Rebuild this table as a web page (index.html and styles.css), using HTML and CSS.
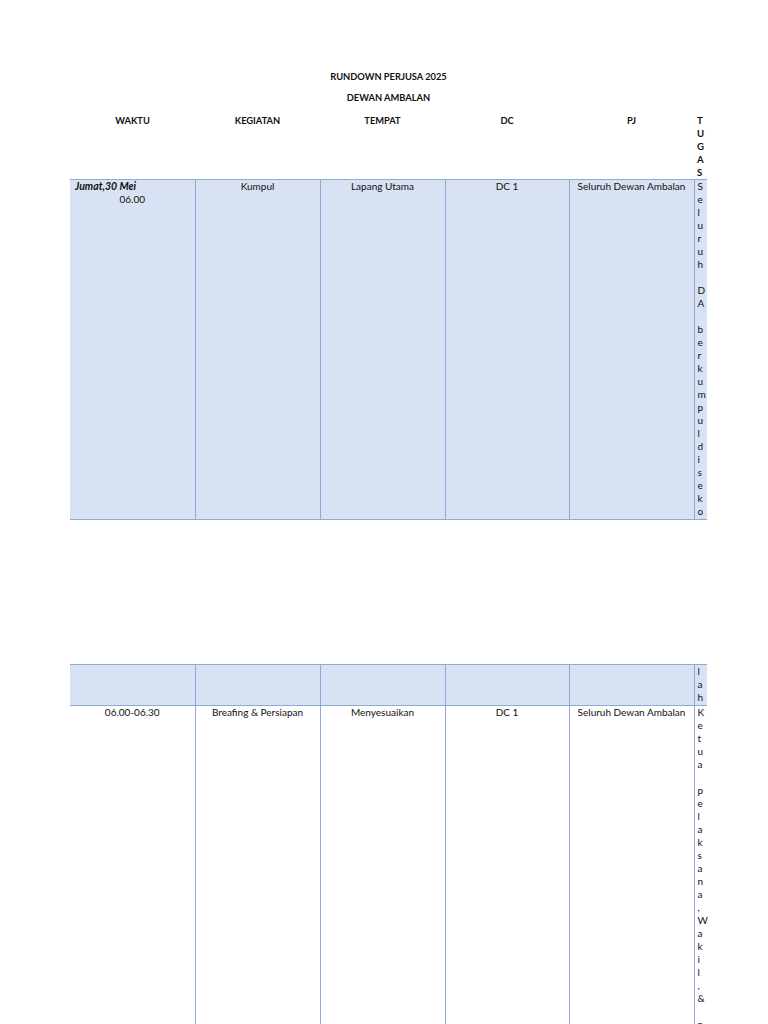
FILE: index.html
```html
<!DOCTYPE html>
<html lang="id">
<head>
<meta charset="utf-8">
<title>Rundown Perjusa 2025</title>
<link rel="stylesheet" href="styles.css">
</head>
<body>
<div class="page">
  <p class="title">RUNDOWN PERJUSA 2025</p>
  <p class="subtitle">DEWAN AMBALAN</p>
  <table class="grid first">
    <colgroup><col class="c"><col class="c"><col class="c"><col class="c4"><col class="c"><col class="narrow"></colgroup>
    <thead>
      <tr class="head">
        <th>WAKTU</th><th>KEGIATAN</th><th>TEMPAT</th><th>DC</th><th>PJ</th>
        <th class="vert">T
U
G
A
S</th>
      </tr>
    </thead>
    <tbody>
      <tr class="shade">
        <td><div class="day">Jumat,30 Mei</div><div class="time">06.00</div></td>
        <td>Kumpul</td>
        <td>Lapang Utama</td>
        <td>DC 1</td>
        <td>Seluruh Dewan Ambalan</td>
        <td class="vert">S
e
l
u
r
u
h

D
A

b
e
r
k
u
m
p
u
l
d
i
s
e
k
o</td>
      </tr>
    </tbody>
  </table>

  <table class="grid second">
    <colgroup><col class="c"><col class="c"><col class="c"><col class="c4"><col class="c"><col class="narrow"></colgroup>
    <tbody>
      <tr class="shade">
        <td></td><td></td><td></td><td></td><td></td>
        <td class="vert">l
a
h</td>
      </tr>
      <tr>
        <td>06.00-06.30</td>
        <td>Breafing &amp; Persiapan</td>
        <td>Menyesuaikan</td>
        <td>DC 1</td>
        <td>Seluruh Dewan Ambalan</td>
        <td class="vert">K
e
t
u
a

p
e
l
a
k
s
a
n
a
,
W
a
k
i
l
,
&amp;

p
a
n
i
t
i
a</td>
      </tr>
    </tbody>
  </table>
</div>
</body>
</html>
```

FILE: styles.css
```css
html, body {
  margin: 0;
  padding: 0;
  background: #ffffff;
}

body {
  font-family: Lato, "Open Sans", sans-serif;
  font-size: 10px;
  line-height: 13px;
  color: #111111;
}

.page {
  width: 637px;
  padding: 70px 0 0 70px;
}

.title,
.subtitle {
  margin: 0;
  text-align: center;
  font-weight: bold;
  font-size: 9.3px;
}

.title {
  margin-bottom: 8px;
}

.subtitle {
  margin-bottom: 9px;
}

.grid {
  width: 637px;
  table-layout: fixed;
  border-collapse: collapse;
}

.grid col.c { width: 125px; }
.grid col.c4 { width: 124px; }
.grid col.narrow { width: 13px; }

.grid th,
.grid td {
  padding: 1px 5px 0;
  vertical-align: top;
  text-align: center;
  font-weight: normal;
  overflow: hidden;
}

.grid th {
  font-weight: bold;
  font-size: 9.3px;
  padding-top: 1px;
}

.grid th + th,
.grid td + td {
  border-left: 1px solid #8eaadb;
}

.grid thead th + th {
  border-left: none;
}

.grid tbody tr {
  border-top: 1px solid #8eaadb;
}

.grid td {
  padding-top: 0;
}

.first tbody tr {
  border-bottom: 1px solid #8eaadb;
}

.shade td {
  background: #d9e2f3;
}

.grid .vert {
  white-space: pre-line;
  text-align: left;
  padding: 0 0 1px 3px;
  line-height: 13px;
  overflow: visible;
}

.grid thead .vert {
  padding: 1px 0 0 3px;
  font-size: 9.6px;
}

.day {
  text-align: left;
  font-weight: bold;
  font-style: italic;
  font-size: 10.5px;
}

.time {
  text-align: center;
}

.second {
  margin-top: 144px;
}
```
